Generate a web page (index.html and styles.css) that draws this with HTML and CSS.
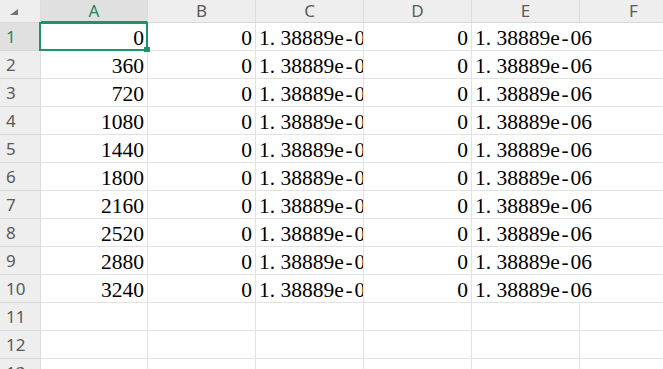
FILE: index.html
```html
<!DOCTYPE html>
<html lang="en">
<head>
  <meta charset="UTF-8">
  <meta name="viewport" content="width=device-width, initial-scale=1">
  <title>Sheet1</title>
  <link rel="stylesheet" href="styles.css">
</head>
<body>
  <div class="viewport">
    <div class="sheet">
      <div class="corner"><span class="tri"></span></div>
      <div class="colhead active">A</div>
      <div class="colhead">B</div>
      <div class="colhead">C</div>
      <div class="colhead">D</div>
      <div class="colhead">E</div>
      <div class="colhead">F</div>

      <div class="rowhead active">1</div>
      <div class="cell num">0</div><div class="cell num">0</div>
      <div class="cell sci"><span class="txt">1<span class="pt">.</span>38889e<span class="mn">-</span>06</span></div>
      <div class="cell num">0</div>
      <div class="cell sci spill"><span class="txt">1<span class="pt">.</span>38889e<span class="mn">-</span>06</span></div>
      <div class="cell"></div>

      <div class="rowhead">2</div>
      <div class="cell num">360</div><div class="cell num">0</div>
      <div class="cell sci"><span class="txt">1<span class="pt">.</span>38889e<span class="mn">-</span>06</span></div>
      <div class="cell num">0</div>
      <div class="cell sci spill"><span class="txt">1<span class="pt">.</span>38889e<span class="mn">-</span>06</span></div>
      <div class="cell"></div>

      <div class="rowhead">3</div>
      <div class="cell num">720</div><div class="cell num">0</div>
      <div class="cell sci"><span class="txt">1<span class="pt">.</span>38889e<span class="mn">-</span>06</span></div>
      <div class="cell num">0</div>
      <div class="cell sci spill"><span class="txt">1<span class="pt">.</span>38889e<span class="mn">-</span>06</span></div>
      <div class="cell"></div>

      <div class="rowhead">4</div>
      <div class="cell num">1080</div><div class="cell num">0</div>
      <div class="cell sci"><span class="txt">1<span class="pt">.</span>38889e<span class="mn">-</span>06</span></div>
      <div class="cell num">0</div>
      <div class="cell sci spill"><span class="txt">1<span class="pt">.</span>38889e<span class="mn">-</span>06</span></div>
      <div class="cell"></div>

      <div class="rowhead">5</div>
      <div class="cell num">1440</div><div class="cell num">0</div>
      <div class="cell sci"><span class="txt">1<span class="pt">.</span>38889e<span class="mn">-</span>06</span></div>
      <div class="cell num">0</div>
      <div class="cell sci spill"><span class="txt">1<span class="pt">.</span>38889e<span class="mn">-</span>06</span></div>
      <div class="cell"></div>

      <div class="rowhead">6</div>
      <div class="cell num">1800</div><div class="cell num">0</div>
      <div class="cell sci"><span class="txt">1<span class="pt">.</span>38889e<span class="mn">-</span>06</span></div>
      <div class="cell num">0</div>
      <div class="cell sci spill"><span class="txt">1<span class="pt">.</span>38889e<span class="mn">-</span>06</span></div>
      <div class="cell"></div>

      <div class="rowhead">7</div>
      <div class="cell num">2160</div><div class="cell num">0</div>
      <div class="cell sci"><span class="txt">1<span class="pt">.</span>38889e<span class="mn">-</span>06</span></div>
      <div class="cell num">0</div>
      <div class="cell sci spill"><span class="txt">1<span class="pt">.</span>38889e<span class="mn">-</span>06</span></div>
      <div class="cell"></div>

      <div class="rowhead">8</div>
      <div class="cell num">2520</div><div class="cell num">0</div>
      <div class="cell sci"><span class="txt">1<span class="pt">.</span>38889e<span class="mn">-</span>06</span></div>
      <div class="cell num">0</div>
      <div class="cell sci spill"><span class="txt">1<span class="pt">.</span>38889e<span class="mn">-</span>06</span></div>
      <div class="cell"></div>

      <div class="rowhead">9</div>
      <div class="cell num">2880</div><div class="cell num">0</div>
      <div class="cell sci"><span class="txt">1<span class="pt">.</span>38889e<span class="mn">-</span>06</span></div>
      <div class="cell num">0</div>
      <div class="cell sci spill"><span class="txt">1<span class="pt">.</span>38889e<span class="mn">-</span>06</span></div>
      <div class="cell"></div>

      <div class="rowhead">10</div>
      <div class="cell num">3240</div><div class="cell num">0</div>
      <div class="cell sci"><span class="txt">1<span class="pt">.</span>38889e<span class="mn">-</span>06</span></div>
      <div class="cell num">0</div>
      <div class="cell sci spill"><span class="txt">1<span class="pt">.</span>38889e<span class="mn">-</span>06</span></div>
      <div class="cell"></div>

      <div class="rowhead">11</div>
      <div class="cell"></div><div class="cell"></div><div class="cell"></div>
      <div class="cell"></div><div class="cell"></div><div class="cell"></div>

      <div class="rowhead">12</div>
      <div class="cell"></div><div class="cell"></div><div class="cell"></div>
      <div class="cell"></div><div class="cell"></div><div class="cell"></div>

      <div class="rowhead">13</div>
      <div class="cell"></div><div class="cell"></div><div class="cell"></div>
      <div class="cell"></div><div class="cell"></div><div class="cell"></div>
    </div>

    <div class="selection"><span class="handle"></span></div>
  </div>
</body>
</html>
```

FILE: styles.css
```css
* {
  margin: 0;
  padding: 0;
  box-sizing: border-box;
}

body {
  background: #fff;
  overflow: hidden;
}

.viewport {
  position: relative;
  width: 663px;
  height: 369px;
  overflow: hidden;
}

.sheet {
  display: grid;
  grid-template-columns: 41px 107px repeat(5, 108px);
  grid-template-rows: 23px;
  grid-auto-rows: 28px;
  width: 797px;
}

.corner,
.colhead,
.rowhead {
  background: #eeeeee;
  font-family: "Noto Sans", "DejaVu Sans", sans-serif;
  font-size: 17px;
  color: #5a5a5a;
  border-right: 1px solid #dcdcdc;
  border-bottom: 1px solid #d8d8d8;
}

.corner {
  display: flex;
  align-items: flex-start;
  padding: 9px 0 0 10px;
}

.tri {
  width: 0;
  height: 0;
  border-left: 8px solid transparent;
  border-bottom: 6px solid #727272;
}

.colhead {
  display: flex;
  align-items: center;
  justify-content: center;
  line-height: 17px;
  padding-bottom: 2px;
}

.rowhead {
  display: flex;
  align-items: center;
  padding-left: 6px;
  line-height: 20px;
}

.colhead.active {
  background: #e0e0e0;
  color: #1b8a5c;
  border-bottom: 2px solid #1b9467;
  padding-bottom: 1px;
}

.rowhead.active {
  background: #e0e0e0;
  color: #1b8a5c;
}

.cell {
  border-right: 1px solid #e2e2e2;
  border-bottom: 1px solid #e2e2e2;
  font-family: "Liberation Serif", "DejaVu Serif", serif;
  font-size: 21.5px;
  line-height: 20px;
  color: #000;
  display: flex;
  align-items: flex-end;
  padding: 0 3px 2px 3px;
  overflow: hidden;
  white-space: nowrap;
}

.cell.num {
  justify-content: flex-end;
}

.cell.sci {
  justify-content: flex-start;
}

.cell.spill {
  overflow: visible;
  border-right-color: transparent;
}

.txt {
  flex-shrink: 0;
}

.pt {
  display: inline-block;
  width: 0.5em;
}

.mn {
  display: inline-block;
  width: 0.5em;
  text-align: center;
}

.selection {
  position: absolute;
  left: 39px;
  top: 22px;
  width: 109px;
  height: 29px;
  border: 2px solid #1b9467;
}

.handle {
  position: absolute;
  right: -4px;
  bottom: -3px;
  width: 6px;
  height: 5px;
  background: #1b9467;
}
```
